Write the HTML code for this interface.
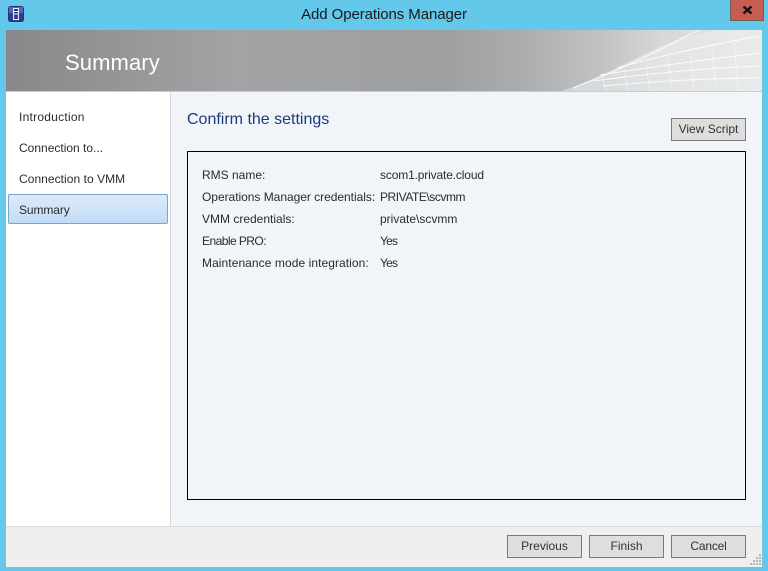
<!DOCTYPE html>
<html><head><meta charset="utf-8">
<style>
html,body{margin:0;padding:0}
body{width:768px;height:571px;overflow:hidden;background:#64c8eb;position:relative;font-family:"Liberation Sans",sans-serif;font-size:12px;color:#2b2b2b}
div{position:absolute;box-sizing:border-box}
.t{white-space:nowrap;line-height:16px}
.b{background:#dedede;border:1px solid #7a7a7a;text-align:center;line-height:21px;color:#333;white-space:nowrap}
</style></head><body>
<svg style="position:absolute;left:8px;top:6px" width="16" height="16" viewBox="0 0 16 16"><rect x=".5" y=".5" width="15" height="15" rx="2" fill="#2c3f8f" stroke="#27336f"/><rect x="1" y="1" width="14" height="6" fill="#5566b4"/><rect x="5.5" y="2.5" width="5" height="11" fill="#2c3f8f" stroke="#e8ecf6"/><path d="M5.5 5.5h5M5.5 8h5" stroke="#e8ecf6"/></svg>
<div class="t" style="left:0;top:6px;width:768px;text-align:center;font-size:15px;line-height:18px;color:#1a1a1a;letter-spacing:-.08px">Add Operations Manager</div>
<div style="left:730px;top:0;width:34px;height:21px;background:#c75c50;border:1px solid #70605c;border-top:0"></div>
<svg style="position:absolute;left:742px;top:5px" width="11" height="10" viewBox="0 0 11 10"><path d="M1.5 1.5 9.5 8.5M9.5 1.5 1.5 8.5" stroke="#111" stroke-width="2.4"/></svg>

<div style="left:6px;top:30px;width:756px;height:537px;background:#f1f4f8"></div>
<div style="left:6px;top:30px;width:756px;height:61px;background:linear-gradient(90deg,#88888b 0%,#a3a3a5 30%,#9d9fa1 58%,#aaacad 68%,#bfc0c2 78%,#d8d8d9 87%,#e8e8e9 100%)"></div>
<svg style="position:absolute;left:6px;top:30px" width="756" height="62" viewBox="0 0 756 62">
<path d="M556 61C590 50 625 30 660 14Q690 2 716 0H756V61Z" fill="#ebecec" fill-opacity=".55"/>
<g fill="none" stroke="#fff" stroke-width="1" opacity=".9">
<path d="M567 58Q621 37 671 11T711 1"/><path d="M611 38Q671 21 754 6"/><path d="M594 45Q671 33 754 23"/><path d="M587 51Q687 38 754 36"/><path d="M597 56Q687 48 754 48"/>
</g>
<g fill="none" stroke="#fff" stroke-width="1" opacity=".45">
<path d="M600 61 596 46M622 61 618 38M644 61 640 34M666 61 662 28M688 61 684 20M710 61 706 14M732 61 728 8"/>
</g>
<rect y="61" width="756" height="1" fill="#ccc"/>
</svg>
<div class="t" style="left:65px;top:48px;font-size:22px;line-height:30px;color:#fff;letter-spacing:.1px">Summary</div>

<div style="left:6px;top:92px;width:165px;height:435px;background:#fff;border-right:1px solid #d4d8dc"></div>
<div style="left:8px;top:194px;width:160px;height:30px;background:linear-gradient(#dcebfb,#c2dcf7);border:1px solid #7da2ce;border-radius:2px"></div>
<div class="t" style="left:19px;top:109px;letter-spacing:.25px">Introduction</div>
<div class="t" style="left:19px;top:140px">Connection to...</div>
<div class="t" style="left:19px;top:171px;letter-spacing:.05px">Connection to VMM</div>
<div class="t" style="left:19px;top:202px;letter-spacing:-.1px">Summary</div>

<div class="t" style="left:187px;top:110px;font-size:16px;line-height:20px;color:#1f3a7d">Confirm the settings</div>
<div class="b" style="left:671px;top:118px;width:75px;height:23px">View Script</div>
<div style="left:187px;top:151px;width:559px;height:349px;border:1px solid #000"></div>

<div class="t" style="left:202px;top:167px">RMS name:</div>
<div class="t" style="left:202px;top:189px;letter-spacing:-.03px">Operations Manager credentials:</div>
<div class="t" style="left:202px;top:211px">VMM credentials:</div>
<div class="t" style="left:202px;top:233px;letter-spacing:-.55px">Enable PRO:</div>
<div class="t" style="left:202px;top:255px;letter-spacing:.07px">Maintenance mode integration:</div>
<div class="t" style="left:380px;top:167px;letter-spacing:-.15px">scom1.private.cloud</div>
<div class="t" style="left:380px;top:189px;letter-spacing:-.45px">PRIVATE\scvmm</div>
<div class="t" style="left:380px;top:211px">private\scvmm</div>
<div class="t" style="left:380px;top:233px;letter-spacing:-.8px">Yes</div>
<div class="t" style="left:380px;top:255px;letter-spacing:-.8px">Yes</div>

<div style="left:6px;top:526px;width:756px;height:41px;background:#efefef;border-top:1px solid #d9d9d9"></div>
<div class="b" style="left:507px;top:535px;width:75px;height:23px">Previous</div>
<div class="b" style="left:589px;top:535px;width:75px;height:23px">Finish</div>
<div class="b" style="left:671px;top:535px;width:75px;height:23px;letter-spacing:-.2px">Cancel</div>
<svg style="position:absolute;left:750px;top:554px" width="12" height="12" viewBox="0 0 12 12" fill="#b5b5b5"><rect x="9" y="0" width="2" height="2"/><rect x="6" y="3" width="2" height="2"/><rect x="9" y="3" width="2" height="2"/><rect x="3" y="6" width="2" height="2"/><rect x="6" y="6" width="2" height="2"/><rect x="9" y="6" width="2" height="2"/><rect x="0" y="9" width="2" height="2"/><rect x="3" y="9" width="2" height="2"/><rect x="6" y="9" width="2" height="2"/><rect x="9" y="9" width="2" height="2"/></svg>
</body></html>
